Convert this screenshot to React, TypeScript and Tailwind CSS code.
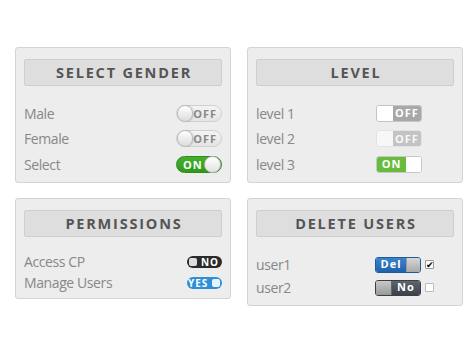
import React from "react";

const font = { fontFamily: '"Open Sans", "Liberation Sans", sans-serif' };

function Panel({ title, children, className }: { title: string; children: React.ReactNode; className?: string }) {
  return (
    <div className={`rounded-[3px] border border-[#d4d4d4] bg-[#ededed] px-2 pt-[11px] ${className ?? ""}`}>
      <div className="flex h-[27px] items-center justify-center rounded-[2px] border border-[#cfcfcf] bg-[#dedede] pl-[2px] text-[14.5px] font-bold tracking-[1.8px] text-[#555]">
        {title}
      </div>
      {children}
    </div>
  );
}

// round iOS-style switch
function RoundSwitch({ on }: { on: boolean }) {
  if (on) {
    return (
      <div className="flex h-[17px] w-[46px] items-center justify-between rounded-full border border-[#2f8a1c] bg-gradient-to-b from-[#46b02c] to-[#2e9a1c] pl-[6px]">
        <span className="text-[11px] font-bold leading-none tracking-[1px] text-white">ON</span>
        <span className="h-[17px] w-[17px] rounded-full border border-[#bbb] bg-gradient-to-b from-white to-[#e2e2e2]" />
      </div>
    );
  }
  return (
    <div className="flex h-[17px] w-[46px] items-center justify-between rounded-full border border-[#cfcfcf] bg-gradient-to-b from-[#f4f4f4] to-[#e4e4e4] pr-[4px]">
      <span className="h-[17px] w-[17px] rounded-full border border-[#bdbdbd] bg-gradient-to-b from-white to-[#dcdcdc] shadow-[1px_0_1px_rgba(0,0,0,0.15)]" />
      <span className="text-[11px] font-bold leading-none tracking-[1px] text-[#888]">OFF</span>
    </div>
  );
}

// square flat switch
function FlatSwitch({ on, faded }: { on: boolean; faded?: boolean }) {
  if (on) {
    return (
      <div className="flex h-[17px] w-[46px] overflow-hidden rounded-[3px] border border-[#c8c8c8] bg-white">
        <span className="flex w-[29px] items-center justify-center bg-[#68bb3c] text-[11px] font-bold tracking-[1px] text-white">ON</span>
        <span className="flex-1 bg-white" />
      </div>
    );
  }
  return (
    <div className={`flex h-[17px] w-[46px] overflow-hidden rounded-[3px] border ${faded ? "border-[#dedede] opacity-60" : "border-[#c4c4c4]"}`}>
      <span className="w-[16px] bg-white" />
      <span className="flex flex-1 items-center justify-center bg-[#a8a8a8] text-[11px] font-bold tracking-[1px] text-white">OFF</span>
    </div>
  );
}

function Row({ label, children, h = "h-[25.5px]" }: { label: string; children: React.ReactNode; h?: string }) {
  return (
    <div className={`flex items-center justify-between ${h}`}>
      <span className="text-[14px] tracking-[-0.4px] text-[#888]">{label}</span>
      {children}
    </div>
  );
}

export default function App() {
  return (
    <div className="h-[356px] w-[474px] bg-white" style={font}>
      <div className="grid grid-cols-[216px_216px] gap-x-[16px] px-[15px] pt-[47px]">
        <Panel title="SELECT GENDER" className="h-[136px]">
          <div className="mt-[14.5px]">
            <Row label="Male"><RoundSwitch on={false} /></Row>
            <Row label="Female"><RoundSwitch on={false} /></Row>
            <Row label="Select"><RoundSwitch on /></Row>
          </div>
        </Panel>
        <Panel title="LEVEL" className="h-[136px]">
          <div className="mt-[14.5px] pr-[32px]">
            <Row label="level 1"><FlatSwitch on={false} /></Row>
            <Row label="level 2"><FlatSwitch on={false} faded /></Row>
            <Row label="level 3"><FlatSwitch on /></Row>
          </div>
        </Panel>

        <Panel title="PERMISSIONS" className="mt-[15px] h-[101px]">
          <div className="mt-[14px]">
            <Row label="Access CP" h="h-[21px]">
              <div className="flex h-[12px] w-[35px] items-center rounded-full bg-[#2a2a2a] pl-[2px] pr-[3px]">
                <span className="h-[8px] w-[8px] rounded-[2px] bg-[#ddd]" />
                <span className="ml-auto text-[10px] font-bold leading-none tracking-[1px] text-white">NO</span>
              </div>
            </Row>
            <Row label="Manage Users" h="h-[21px]">
              <div className="flex h-[12px] w-[35px] items-center rounded-full bg-[#2e8fd8] pl-[1px] pr-[2px]">
                <span className="text-[10px] font-bold leading-none tracking-[1px] text-white">YES</span>
                <span className="ml-auto h-[8px] w-[8px] rounded-[2px] bg-[#e8f2fb]" />
              </div>
            </Row>
          </div>
        </Panel>
        <Panel title="DELETE USERS" className="mt-[15px] h-[108px]">
          <div className="mt-[16px]">
            <Row label="user1" h="h-[23px]">
              <div className="mr-[20px] flex items-center gap-[4px]">
                <div className="flex h-[16px] w-[46px] overflow-hidden rounded-[3px] border border-[#1f5b9a]">
                  <span className="flex w-[30px] items-center justify-center bg-gradient-to-b from-[#3c83cc] to-[#1f62ab] text-[11px] font-bold tracking-[1px] text-white">Del</span>
                  <span className="flex-1 border-l border-[#999] bg-gradient-to-b from-[#d6d6d6] to-[#a9a9a9]" />
                </div>
                <span className="flex h-[9px] w-[9px] items-center justify-center rounded-[1px] border border-[#999] bg-white text-[9px] leading-none text-black">✔</span>
              </div>
            </Row>
            <Row label="user2" h="h-[23px]">
              <div className="mr-[20px] flex items-center gap-[4px]">
                <div className="flex h-[16px] w-[46px] overflow-hidden rounded-[3px] border border-[#3a3f47]">
                  <span className="w-[16px] border-r border-[#666] bg-gradient-to-b from-[#c9c9c9] to-[#999]" />
                  <span className="flex flex-1 items-center justify-center bg-gradient-to-b from-[#5f6670] to-[#3b4049] text-[11px] font-bold tracking-[1px] text-white">No</span>
                </div>
                <span className="h-[9px] w-[9px] rounded-[1px] border border-[#bbb] bg-white" />
              </div>
            </Row>
          </div>
        </Panel>
      </div>
    </div>
  );
}
